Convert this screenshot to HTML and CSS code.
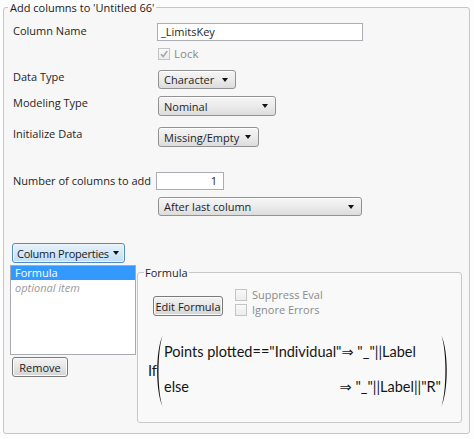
FILE: index.html
```html
<!DOCTYPE html>
<html lang="en">
<head>
  <meta charset="UTF-8">
  <title>Add columns</title>
  <link rel="stylesheet" href="styles.css">
</head>
<body>
  <fieldset class="panel">
    <legend>Add columns to 'Untitled 66'</legend>

    <div class="row row-name">
      <span class="lbl">Column Name</span>
      <div class="field name">_LimitsKey</div>
    </div>

    <div class="row row-lock">
      <span class="lbl"></span>
      <span class="check checked">
        <svg width="10" height="10" viewBox="0 0 10 10"><path d="M2 5.2 L4.2 7.6 L8.2 2" fill="none" stroke="#a3a3a3" stroke-width="1.5"/></svg>
      </span>
      <span class="check-text">Lock</span>
    </div>

    <div class="row row-type">
      <span class="lbl">Data Type</span>
      <div class="combo w-char"><span>Character</span><i class="arrow"></i></div>
    </div>

    <div class="row row-model">
      <span class="lbl">Modeling Type</span>
      <div class="combo w-model"><span>Nominal</span><i class="arrow"></i></div>
    </div>

    <div class="row row-init">
      <span class="lbl">Initialize Data</span>
      <div class="combo w-init"><span>Missing/Empty</span><i class="arrow"></i></div>
    </div>

    <div class="row row-count">
      <span class="lbl">Number of columns to add</span>
      <div class="field count">1</div>
    </div>

    <div class="row row-after">
      <span class="lbl"></span>
      <div class="combo w-after"><span>After last column</span><i class="arrow"></i></div>
    </div>

    <div class="btn props-btn"><span>Column Properties</span><i class="arrow"></i></div>

    <div class="props-area">
      <div class="side">
        <div class="list">
          <div class="item selected">Formula</div>
          <div class="item optional">optional item</div>
        </div>
        <div class="btn remove-btn">Remove</div>
      </div>

      <fieldset class="formula-box">
        <legend>Formula</legend>
        <div class="formula-top">
          <div class="btn edit-btn">Edit Formula</div>
          <div class="opts">
            <div class="opt-row"><span class="check"></span><span class="check-text">Suppress Eval</span></div>
            <div class="opt-row"><span class="check"></span><span class="check-text">Ignore Errors</span></div>
          </div>
        </div>

        <div class="formula">
          <span class="if">If</span>
          <svg class="paren" width="8" height="72" viewBox="0 0 8 72"><path d="M7.6 0.5 C0.4 16, 0.4 56, 7.6 71.5 C2.2 56, 2.2 16, 7.6 0.5 Z" fill="#111"/></svg>
          <div class="cases">
            <div class="case">Points plotted=="Individual"⇒ "_"||Label</div>
            <div class="case split"><span>else</span><span>⇒ "_"||Label||"R"</span></div>
          </div>
          <svg class="paren" width="8" height="72" viewBox="0 0 8 72"><path d="M0.4 0.5 C7.6 16, 7.6 56, 0.4 71.5 C5.8 56, 5.8 16, 0.4 0.5 Z" fill="#111"/></svg>
        </div>
      </fieldset>
    </div>
  </fieldset>
</body>
</html>
```

FILE: styles.css
```css
* {
  margin: 0;
  padding: 0;
  box-sizing: border-box;
}

body {
  background-color: #fdfdfd;
  font-family: "Open Sans", "Liberation Sans", sans-serif;
  font-size: 11px;
  color: #1e1e1e;
}

.panel {
  width: 467px;
  margin-left: 3px;
  border: 1px solid #c6c6c6;
  border-radius: 3px;
  background-color: #f7f7f7;
  padding: 8px 7px 10px 6px;
  min-width: 0;
}

.panel > legend {
  margin-left: -2px;
  padding: 0 2px;
  line-height: 15px;
  font-size: 11px;
  color: #1a1a1a;
}

.row {
  display: flex;
  align-items: flex-start;
  padding-left: 3px;
}

.lbl {
  width: 144px;
  flex: none;
  line-height: 14px;
}

.row-name .lbl { padding-top: 1px; }
.row-lock { margin-top: 6px; align-items: center; height: 14px; }
.row-type { margin-top: 9px; }
.row-model { margin-top: 7px; }
.row-init { margin-top: 11px; }
.row-count { margin-top: 25px; }
.row-count .lbl { padding-top: 2px; }
.row-after { margin-top: 7px; }

.field {
  height: 18px;
  line-height: 16px;
  background-color: #fff;
  border: 1px solid #abadb3;
  padding: 0 3px;
}

.field.name { width: 206px; }
.field.count { width: 68px; margin-left: -1px; text-align: right; padding-right: 6px; }

.check {
  display: inline-flex;
  align-items: center;
  justify-content: center;
  width: 12px;
  height: 12px;
  border: 1px solid #c4c4c4;
  background: linear-gradient(#f9f9f9, #ececec);
  margin-left: 1px;
  flex: none;
}

.check-text {
  color: #8a8a8a;
  margin-left: 4px;
  line-height: 14px;
}

.row-lock .check-text { font-size: 11.5px; }

.combo {
  display: flex;
  align-items: center;
  justify-content: space-between;
  height: 20px;
  margin-left: 1px;
  padding: 0 7px 0 5px;
  border: 1px solid #929292;
  border-radius: 3px;
  background: linear-gradient(#f5f5f5, #ebebeb 50%, #dcdcdc);
  box-shadow: inset 0 1px 0 #fff;
}

.w-char { width: 78px; height: 19px; }
.w-model { width: 118px; }
.w-init { width: 101px; }
.w-after { width: 204px; height: 19px; }

.arrow {
  flex: none;
  width: 0;
  height: 0;
  border-left: 3.5px solid transparent;
  border-right: 3.5px solid transparent;
  border-top: 4px solid #111;
}

.btn {
  display: inline-flex;
  align-items: center;
  justify-content: center;
  height: 20px;
  white-space: nowrap;
  border: 1px solid #7a7a7a;
  border-radius: 3px;
  background: linear-gradient(#f3f3f3, #e6e6e6 50%, #d4d4d4);
  box-shadow: inset 0 0 0 1px #fbfbfb;
  color: #1a1a1a;
}

.props-btn {
  width: 113px;
  margin-top: 27px;
  margin-left: 2px;
  justify-content: space-between;
  padding: 0 5px 0 4px;
  letter-spacing: -0.25px;
  border-color: #4f8cbf;
  background: linear-gradient(#e6f2fb, #d3e8f8 50%, #c2ddf3);
  box-shadow: inset 0 0 0 1px #eef6fc;
}

.props-area {
  display: flex;
  align-items: flex-start;
  gap: 1px;
  margin-top: 2px;
}

.side {
  width: 126px;
  flex: none;
}

.list {
  height: 90px;
  background-color: #fff;
  border: 1px solid #a8abb2;
}

.item {
  line-height: 14px;
  padding-left: 4px;
}

.item.selected {
  background-color: #3399ff;
  color: #fff;
}

.item.optional {
  color: #9a9a9a;
  font-style: italic;
  padding-top: 1px;
}

.remove-btn {
  width: 56px;
  margin-top: 2px;
  margin-left: 2px;
}

.formula-box {
  flex: 1;
  min-width: 0;
  border: 1px solid #c8c8c8;
  border-radius: 3px;
  background-color: #f9f9f9;
  padding: 8px 12px 15px 15px;
}

.formula-box > legend {
  margin-left: -9px;
  padding: 0 1px;
  line-height: 15px;
  font-size: 11px;
}

.formula-top {
  display: flex;
  align-items: flex-end;
  gap: 12px;
}

.edit-btn {
  width: 70px;
}

.opts {
  display: flex;
  flex-direction: column;
  gap: 2px;
}

.opt-row {
  display: flex;
  align-items: center;
  height: 13px;
}

.opt-row .check {
  margin-left: 0;
}

.opt-row .check-text {
  margin-left: 5px;
}

.formula {
  display: flex;
  align-items: center;
  margin-top: 19px;
  margin-left: -5px;
  height: 72px;
  font-family: "Lato", "DejaVu Sans", sans-serif;
  font-size: 14.5px;
  color: #151515;
}

.if {
  width: 7px;
  padding-bottom: 2px;
}

.paren {
  flex: none;
}

.cases {
  width: 278px;
  align-self: flex-start;
  display: flex;
  flex-direction: column;
  gap: 17px;
  padding: 8px 0 0 1px;
}

.case {
  line-height: 18px;
  white-space: nowrap;
}

.case.split {
  display: flex;
  justify-content: space-between;
}
```
